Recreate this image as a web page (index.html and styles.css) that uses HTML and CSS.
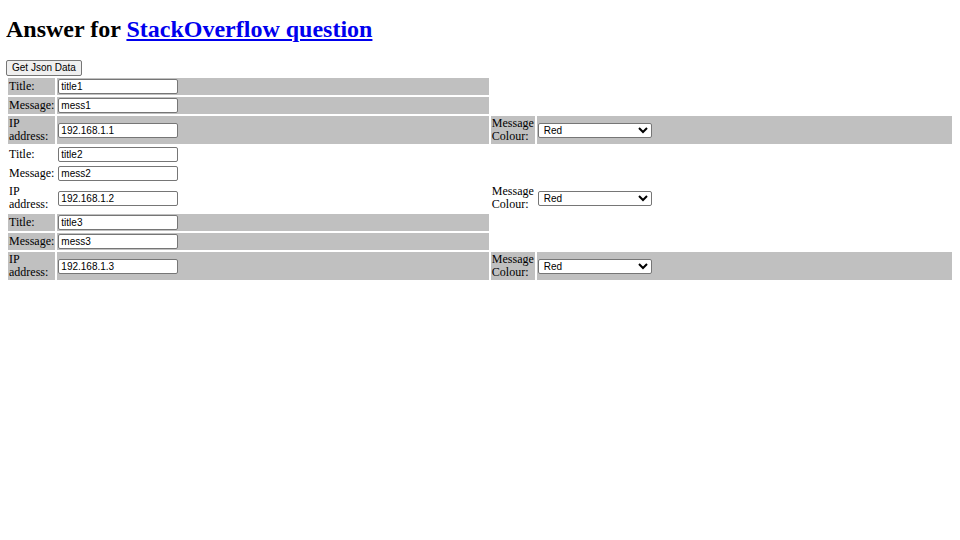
FILE: index.html
```html
<!DOCTYPE html>
<html lang="en">
<head>
    <meta charset="UTF-8">
    <meta name="viewport" content="width=device-width, initial-scale=1.0">
    <title>Answer for StackOverflow question</title>
    <link rel="stylesheet" href="styles.css">
</head>
<body>

    <h1>Answer for <a href="#">StackOverflow question</a></h1>

    <button class="json-button">Get Json Data</button>

    <table class="messages">
        <tr class="shaded">
            <td class="label">Title:</td>
            <td class="field"><input type="text" value="title1"></td>
        </tr>
        <tr class="shaded">
            <td class="label">Message:</td>
            <td class="field"><input type="text" value="mess1"></td>
        </tr>
        <tr class="shaded">
            <td class="label">IP address:</td>
            <td class="field"><input type="text" value="192.168.1.1"></td>
            <td class="label">Message Colour:</td>
            <td class="colour-field">
                <select><option>Red</option><option>Green</option><option>Blue</option></select>
            </td>
        </tr>

        <tr>
            <td class="label">Title:</td>
            <td class="field"><input type="text" value="title2"></td>
        </tr>
        <tr>
            <td class="label">Message:</td>
            <td class="field"><input type="text" value="mess2"></td>
        </tr>
        <tr>
            <td class="label">IP address:</td>
            <td class="field"><input type="text" value="192.168.1.2"></td>
            <td class="label">Message Colour:</td>
            <td class="colour-field">
                <select><option>Red</option><option>Green</option><option>Blue</option></select>
            </td>
        </tr>

        <tr class="shaded">
            <td class="label">Title:</td>
            <td class="field"><input type="text" value="title3"></td>
        </tr>
        <tr class="shaded">
            <td class="label">Message:</td>
            <td class="field"><input type="text" value="mess3"></td>
        </tr>
        <tr class="shaded">
            <td class="label">IP address:</td>
            <td class="field"><input type="text" value="192.168.1.3"></td>
            <td class="label">Message Colour:</td>
            <td class="colour-field">
                <select><option>Red</option><option>Green</option><option>Blue</option></select>
            </td>
        </tr>
    </table>

</body>
</html>
```

FILE: styles.css
```css
body {
    font-family: "Liberation Serif", "Times New Roman", serif;
    font-size: 12px;
    line-height: 13px;
    margin: 6px;
    color: #000000;
    background: #ffffff;
}

h1 {
    font-size: 24px;
    line-height: 28px;
    margin: 9px 0 17px;
}

h1 a {
    color: #0000ee;
}

.json-button {
    display: block;
    height: 16px;
    font-family: "Liberation Sans", Arial, sans-serif;
    font-size: 10px;
    line-height: 12px;
    padding: 1px 5px;
    background: #efefef;
    border: 1px solid #767676;
    border-radius: 2px;
    color: #000000;
}

.messages {
    width: 100%;
    border-spacing: 2px;
}

.messages td {
    padding: 1px;
}

.shaded td {
    background-color: silver;
}

.label {
    width: 1px;
}

.field {
    width: 46%;
}

input,
select {
    display: block;
    font-family: "Liberation Sans", Arial, sans-serif;
    font-size: 10px;
    color: #000000;
    background: #ffffff;
    border: 1px solid #767676;
    border-radius: 2px;
    box-sizing: border-box;
}

input {
    width: 120px;
    height: 15px;
    padding: 0 2px;
}

select {
    width: 114px;
    height: 15px;
    padding: 0 1px;
}
```
